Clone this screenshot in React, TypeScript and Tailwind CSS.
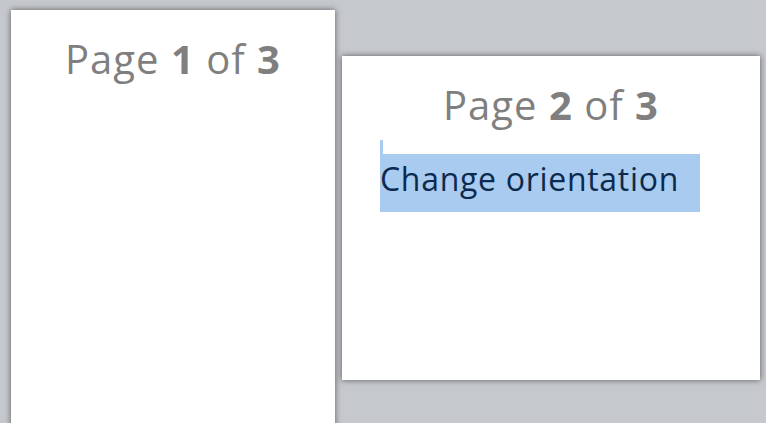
export default function App() {
  return (
    <div
      className="flex items-start gap-[7px] h-[423px] overflow-hidden bg-[#c5c8cd] pl-[11px] pt-[10px]"
      style={{ fontFamily: '"Open Sans", "Liberation Sans", sans-serif' }}
    >
      {/* portrait page */}
      <div className="w-[324px] h-[520px] shrink-0 bg-white shadow-[0_0_6px_rgba(0,0,0,0.55)] pt-[26px]">
        <p className="text-center text-[40px] leading-[46px] tracking-[1px] text-[#7f7f7f]">
          Page <b className="font-bold">1</b> of <b className="font-bold">3</b>
        </p>
      </div>

      {/* landscape page */}
      <div className="mt-[46px] w-[418px] h-[324px] shrink-0 bg-white shadow-[0_0_6px_rgba(0,0,0,0.55)] pt-[26px]">
        <p className="text-center text-[40px] leading-[46px] tracking-[1px] text-[#7f7f7f]">
          Page <b className="font-bold">2</b> of <b className="font-bold">3</b>
        </p>
        <div className="relative ml-[38px] mt-[26px] w-[320px] h-[58px] bg-[#a9cbf0]">
          <span className="absolute left-0 -top-[14px] w-[3px] h-[14px] bg-[#a9cbf0]" />
          <p className="text-[32px] leading-[50px] tracking-[0.7px] text-[#0c2a4e]">Change orientation</p>
        </div>
      </div>
    </div>
  );
}
